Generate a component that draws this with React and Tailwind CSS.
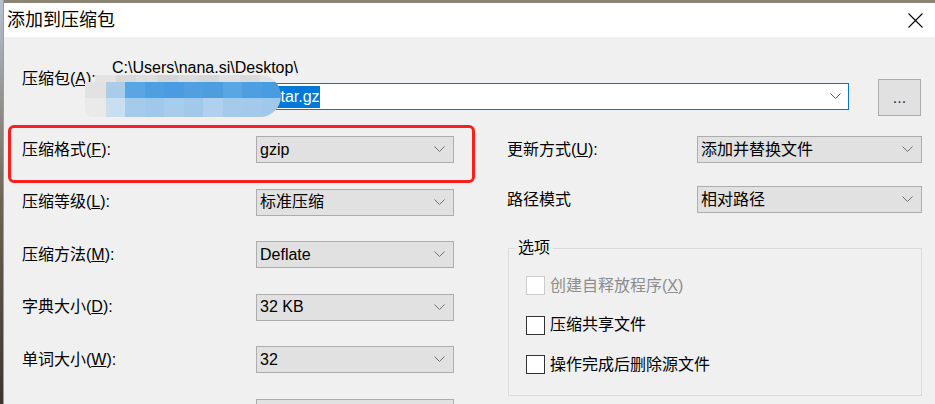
import React from "react";

const font = "font-['Liberation_Sans','Noto_Sans_CJK_SC',sans-serif]";

function Chevron({ className = "" }) {
  return (
    <svg width="11" height="7" viewBox="0 0 11 7" className={className}>
      <path d="M0.5 0.5 L5.5 5.5 L10.5 0.5" fill="none" stroke="currentColor" strokeWidth="1" />
    </svg>
  );
}

function Select({ value, className = "" }) {
  return (
    <div className={`h-[27px] bg-[#e1e1e1] border border-[#adadad] flex items-center justify-between pl-[3px] pr-[8px] text-[16px] leading-[20px] text-black ${className}`}>
      <span>{value}</span>
      <Chevron className="text-[#707070]" />
    </div>
  );
}

function Label({ children, className = "" }) {
  return <div className={`text-[16px] leading-[20px] text-black ${className}`}>{children}</div>;
}

function Checkbox({ label, disabled }) {
  return (
    <div className="flex items-center h-[19px]">
      <div
        className={`w-[19px] h-[19px] bg-white border ${disabled ? "border-[#cccccc]" : "border-[#333333]"}`}
      />
      <span className={`ml-[5px] text-[16px] leading-[20px] ${disabled ? "text-[#8d8d8d]" : "text-black"}`}>
        {label}
      </span>
    </div>
  );
}

// pixelated blur that hides the file name
const blueTop = ["#a8cce9", "#5ba5e2", "#4f9ee0", "#4a9be0", "#529fe0", "#4e9ddf", "#5aa6e2", "#4f9fe0", "#4a9ce0"];
const blueBottom = ["#c8dff1", "#a6cbea", "#a0c8ea", "#a8ccec", "#a3c9ea", "#b0d0ee", "#a6cbea", "#a4caeb", "#a0c8ea"];
const grayRow = ["#e4e4e4", "#d9d9d9", "#dedede", "#d6d6d6", "#dcdcdc", "#d8d8d8", "#e0e0e0", "#dadada", "#e2e2e2"];

function Mosaic() {
  return (
    <div className="absolute left-[85px] top-[75px] w-[196px] h-[42px] flex flex-col rounded-r-[28px] rounded-l-[10px] overflow-hidden blur-[0.5px]">
      <div className="flex h-[7px] pl-[10px]">
        {grayRow.map((c, i) => (
          <div key={i} className="flex-1" style={{ background: c }} />
        ))}
      </div>
      <div className="flex h-[16px]">
        <div className="w-[21px] bg-[#e2e2e2]" />
        {blueTop.map((c, i) => (
          <div key={i} className="flex-1" style={{ background: c }} />
        ))}
      </div>
      <div className="flex h-[19px]">
        <div className="w-[21px] bg-[#eaeaea]" />
        {blueBottom.map((c, i) => (
          <div key={i} className="flex-1" style={{ background: c }} />
        ))}
      </div>
    </div>
  );
}

export default function App() {
  return (
    <div className={`relative w-[935px] h-[404px] overflow-hidden flex bg-[#f0f0f0] ${font}`}>
      {/* desktop behind the dialog */}
      <div className="w-[3px] shrink-0 h-full bg-gradient-to-b from-[#b9c2d2] via-[#6e6452] to-[#3b3530]" />

      <div className="flex-1 min-h-0 flex flex-col border-l border-[#9c9c9c]">
        <div className="h-[3px] shrink-0 bg-[#8c8574]" />

        {/* title bar */}
        <div className="h-[34px] shrink-0 bg-white flex items-center justify-between pl-[3px] pr-[12px]">
          <span className="text-[18px] leading-[22px] text-black">添加到压缩包</span>
          <svg width="15" height="15" viewBox="0 0 15 15">
            <path d="M0.5 0.5 L14.5 14.5 M14.5 0.5 L0.5 14.5" stroke="#000" strokeWidth="1.1" />
          </svg>
        </div>

        {/* body */}
        <div className="flex-1 min-h-0 overflow-hidden bg-[#f0f0f0] pl-[18px] pt-[22px]">
          <div className="flex items-start">
            <Label className="w-[84px] mt-[10px]">
              压缩包(<u>A</u>):
            </Label>
            <div className="w-[743px] flex flex-col">
              <div className="pl-[6px] h-[18px] text-[16px] leading-[18px] text-black">C:\Users\nana.si\Desktop\</div>
              <div className="mt-[6px] h-[27px] bg-white border border-[#0078d7] flex items-center justify-between pl-[2px] pr-[7px]">
                <span className="inline-block h-[22px] leading-[22px] bg-[#0078d7] text-white text-[16px] pl-[167px]">.tar.gz</span>
                <Chevron className="text-[#555555]" />
              </div>
            </div>
            <button className="ml-[29px] mt-[20px] w-[43px] h-[37px] bg-[#e1e1e1] border border-[#adadad] text-[16px] leading-[20px] text-[#333]">
              ...
            </button>
          </div>

          <div className="flex mt-[20px] gap-[53px]">
            {/* left column */}
            <div className="flex flex-col gap-y-[25.5px]">
              {[
                ["压缩格式", "F", "gzip"],
                ["压缩等级", "L", "标准压缩"],
                ["压缩方法", "M", "Deflate"],
                ["字典大小", "D", "32 KB"],
                ["单词大小", "W", "32"],
                ["", "", ""],
              ].map(([name, key, value], i) => (
                <div key={i} className="flex items-center h-[27px] shrink-0">
                  <Label className="w-[234px]">
                    {name && (
                      <>
                        {name}(<u>{key}</u>):
                      </>
                    )}
                  </Label>
                  <Select value={value} className="w-[198px]" />
                </div>
              ))}
            </div>

            {/* right column */}
            <div className="flex flex-col w-[415px]">
              <div className="flex items-center h-[27px]">
                <Label className="w-[190px]">
                  更新方式(<u>U</u>):
                </Label>
                <Select value="添加并替换文件" className="w-[225px]" />
              </div>
              <div className="flex items-center h-[27px] mt-[23px]">
                <Label className="w-[190px]">路径模式</Label>
                <Select value="相对路径" className="w-[225px]" />
              </div>

              <fieldset className="mt-[26px] ml-[1px] w-[414px] border border-[#dcdcdc]">
                <legend className="ml-[6px] px-[3px] text-[16px] leading-[18px] text-black">选项</legend>
                <div className="flex flex-col gap-y-[20.5px] pl-[17px] pt-[19px] pb-[21px]">
                  <Checkbox
                    disabled
                    label={
                      <>
                        创建自释放程序(<u>X</u>)
                      </>
                    }
                  />
                  <Checkbox label="压缩共享文件" />
                  <Checkbox label="操作完成后删除源文件" />
                </div>
              </fieldset>
            </div>
          </div>
        </div>
      </div>

      <Mosaic />

      {/* red annotation box */}
      <div className="absolute left-[8px] top-[125px] w-[467px] h-[58px] border-[3px] border-[#ff1e1e] rounded-[6px]" />
    </div>
  );
}
